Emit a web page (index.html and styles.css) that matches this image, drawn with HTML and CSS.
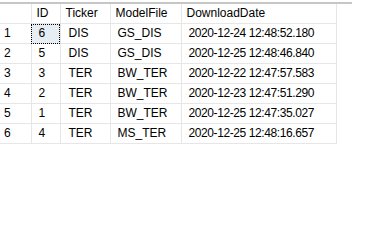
FILE: index.html
```html
<!DOCTYPE html>
<html>
<head>
<meta charset="utf-8">
<link rel="stylesheet" href="styles.css">
</head>
<body>
<div class="grid-wrap">
  <table class="grid">
    <colgroup>
      <col class="c-row"><col class="c-id"><col class="c-ticker"><col class="c-model"><col class="c-date">
    </colgroup>
    <thead>
      <tr>
        <th class="rownum"></th>
        <th>ID</th>
        <th>Ticker</th>
        <th>ModelFile</th>
        <th>DownloadDate</th>
      </tr>
    </thead>
    <tbody>
      <tr><td class="rownum">1</td><td class="sel">6</td><td class="tk">DIS</td><td>GS_DIS</td><td class="date">2020-12-24 12:48:52.180</td></tr>
      <tr><td class="rownum">2</td><td>5</td><td class="tk">DIS</td><td>GS_DIS</td><td class="date">2020-12-25 12:48:46.840</td></tr>
      <tr><td class="rownum">3</td><td>3</td><td class="tk">TER</td><td>BW_TER</td><td class="date">2020-12-22 12:47:57.583</td></tr>
      <tr><td class="rownum">4</td><td>2</td><td class="tk">TER</td><td>BW_TER</td><td class="date">2020-12-23 12:47:51.290</td></tr>
      <tr><td class="rownum">5</td><td>1</td><td class="tk">TER</td><td>BW_TER</td><td class="date">2020-12-25 12:47:35.027</td></tr>
      <tr><td class="rownum">6</td><td>4</td><td class="tk">TER</td><td>MS_TER</td><td class="date">2020-12-25 12:48:16.657</td></tr>
    </tbody>
  </table>
</div>
</body>
</html>
```

FILE: styles.css
```css
html, body {
  margin: 0;
  padding: 0;
  background: #ffffff;
}
body {
  font-family: "Liberation Sans", Arial, sans-serif;
  font-size: 12px;
  color: #000000;
}
.grid-wrap {
  width: 352px;
  margin-top: 2px;
  border-top: 2px solid #c6c6c6;
}
.grid {
  border-collapse: collapse;
  table-layout: fixed;
  width: 336px;
}
.c-row { width: 31px; }
.c-id { width: 29px; }
.c-ticker { width: 50px; }
.c-model { width: 71px; }
.c-date { width: 155px; }
.grid th, .grid td {
  border: 1px solid #e6e6e6;
  height: 19px;
  padding: 0 0 0 7px;
  text-align: left;
  white-space: nowrap;
  overflow: hidden;
  font-weight: normal;
  line-height: 19px;
}
.grid th {
  padding-left: 5px;
  border-top: none;
}
.grid th:first-child, .grid td:first-child {
  border-left: none;
}
.grid td.rownum {
  padding-left: 4px;
}
.grid td.tk {
  padding-left: 8px;
}
.grid td.date {
  letter-spacing: -0.4px;
}
.grid td.sel {
  background: #e6edf3;
  outline: 1px dotted #000000;
  outline-offset: -1px;
}
```
